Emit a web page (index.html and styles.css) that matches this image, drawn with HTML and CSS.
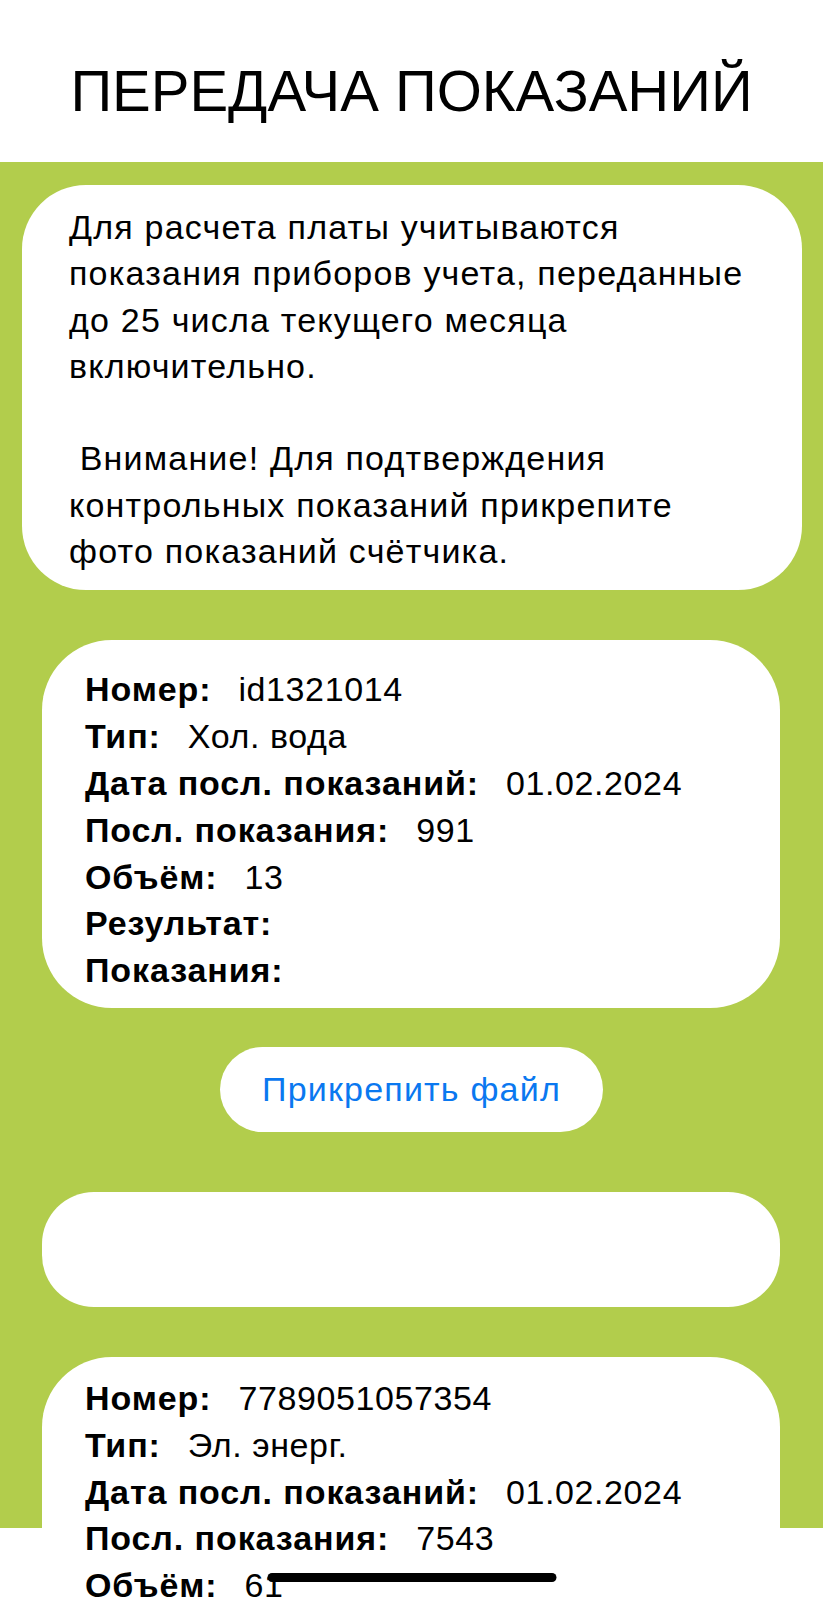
FILE: index.html
```html
<!DOCTYPE html>
<html lang="ru">
<head>
<meta charset="utf-8">
<title>Передача показаний</title>
<link rel="stylesheet" href="styles.css">
</head>
<body>
  <header class="page-header">
    <h1 class="page-title">ПЕРЕДАЧА ПОКАЗАНИЙ</h1>
  </header>
  <main class="content">
    <section class="info-card">
      <p class="info-text">Для расчета платы учитываются<br>показания приборов учета, переданные<br>до 25 числа текущего месяца<br>включительно.<br><br>&nbsp;Внимание! Для подтверждения<br>контрольных показаний прикрепите<br>фото показаний счётчика.</p>
    </section>

    <section class="meter-card meter-card--first">
      <div class="row"><span class="label">Номер:</span><span class="value">id1321014</span></div>
      <div class="row"><span class="label">Тип:</span><span class="value">Хол. вода</span></div>
      <div class="row"><span class="label">Дата посл. показаний:</span><span class="value">01.02.2024</span></div>
      <div class="row"><span class="label">Посл. показания:</span><span class="value">991</span></div>
      <div class="row"><span class="label">Объём:</span><span class="value">13</span></div>
      <div class="row"><span class="label">Результат:</span></div>
      <div class="row"><span class="label">Показания:</span></div>
    </section>

    <button class="attach-btn" type="button">Прикрепить файл</button>

    <div class="input-card"></div>

    <section class="meter-card meter-card--second">
      <div class="row"><span class="label">Номер:</span><span class="value">7789051057354</span></div>
      <div class="row"><span class="label">Тип:</span><span class="value">Эл. энерг.</span></div>
      <div class="row"><span class="label">Дата посл. показаний:</span><span class="value">01.02.2024</span></div>
      <div class="row"><span class="label">Посл. показания:</span><span class="value">7543</span></div>
      <div class="row"><span class="label">Объём:</span><span class="value">61</span></div>
    </section>
  </main>
  <div class="home-indicator"></div>
</body>
</html>
```

FILE: styles.css
```css
* {
  box-sizing: border-box;
}

html, body {
  margin: 0;
  padding: 0;
  background: #ffffff;
}

body {
  font-family: "Liberation Sans", Arial, sans-serif;
  color: #000000;
  width: 823px;
}

.page-header {
  height: 162px;
  padding-top: 62px;
  background: #ffffff;
}

.page-title {
  margin: 0;
  font-size: 58px;
  line-height: 57px;
  font-weight: 400;
  text-align: center;
  letter-spacing: 0;
}

.content {
  background-color: #ffffff;
  background-image: linear-gradient(#b2cd4c, #b2cd4c);
  background-repeat: no-repeat;
  background-size: 100% 1366px;
  padding-top: 23px;
  display: flex;
  flex-direction: column;
  align-items: flex-start;
}

.content > * {
  flex-shrink: 0;
}

.info-card {
  margin: 0 21px 0 22px;
  width: 780px;
  background: #ffffff;
  border-radius: 64px;
  padding: 19px 10px 16px 47px;
}

.info-text {
  margin: 0;
  font-size: 34px;
  line-height: 46.3px;
  letter-spacing: 1.2px;
  white-space: nowrap;
}

.meter-card {
  margin-left: 42px;
  width: 738px;
  background: #ffffff;
  border-radius: 70px;
  padding: 26px 10px 14px 43px;
}

.meter-card--first {
  margin-top: 50px;
}

.meter-card--second {
  margin-top: 50px;
  padding-top: 18px;
  padding-bottom: 60px;
}

.row {
  display: flex;
  align-items: baseline;
  font-size: 34px;
  line-height: 46.8px;
  white-space: nowrap;
}

.label {
  font-weight: 700;
  letter-spacing: 0.9px;
}

.value {
  margin-left: 27px;
  letter-spacing: 0.6px;
}

.attach-btn {
  align-self: center;
  margin-top: 39px;
  width: 383px;
  height: 85px;
  border: none;
  border-radius: 43px;
  background: #ffffff;
  color: #0a78f0;
  font-family: "Liberation Sans", Arial, sans-serif;
  font-size: 34px;
  letter-spacing: 1.2px;
  padding: 0;
  cursor: pointer;
}

.input-card {
  margin-top: 60px;
  margin-left: 42px;
  width: 738px;
  height: 115px;
  background: #ffffff;
  border-radius: 52px;
}

.home-indicator {
  position: fixed;
  left: 50%;
  bottom: 18px;
  transform: translateX(-50%);
  width: 289px;
  height: 9px;
  border-radius: 5px;
  background: #000000;
}
```
